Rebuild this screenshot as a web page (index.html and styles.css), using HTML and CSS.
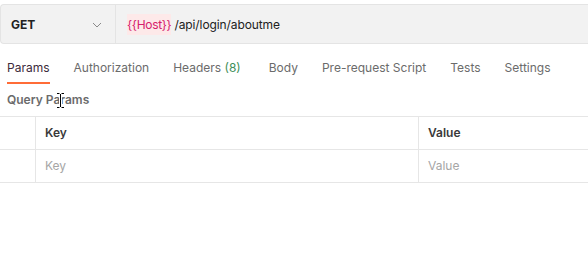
FILE: index.html
```html
<!DOCTYPE html>
<html>
<head>
<meta charset="utf-8">
<link rel="stylesheet" href="styles.css">
</head>
<body>
<div class="page">
  <div class="urlbar">
    <div class="method">
      <span class="method-name">GET</span>
      <svg class="chev" width="10" height="6" viewBox="0 0 10 6"><path d="M1 1 L5 5 L9 1" fill="none" stroke="#8a8a8a" stroke-width="1"/></svg>
    </div>
    <div class="url"><span class="var">{{Host}}</span><span class="path">/api/login/aboutme</span></div>
  </div>
  <div class="tabs">
    <span class="tab active">Params</span>
    <span class="tab">Authorization</span>
    <span class="tab wide">Headers <span class="count">(8)</span></span>
    <span class="tab">Body</span>
    <span class="tab">Pre-request Script</span>
    <span class="tab">Tests</span>
    <span class="tab">Settings</span>
  </div>
  <div class="section-title">Query Params</div>
  <div class="table">
    <div class="row head">
      <div class="cell chk"></div>
      <div class="cell key">Key</div>
      <div class="cell val">Value</div>
    </div>
    <div class="row">
      <div class="cell chk"></div>
      <div class="cell key ph">Key</div>
      <div class="cell val ph">Value</div>
    </div>
  </div>
  <svg class="cursor" width="9" height="17" viewBox="0 0 9 17"><path d="M1 1.5 H3.5 M5.5 1.5 H8 M4.5 2 V15 M1 15.5 H3.5 M5.5 15.5 H8" fill="none" stroke="#fff" stroke-width="3"/><path d="M1 1.5 H3.5 M5.5 1.5 H8 M4.5 2 V15 M1 15.5 H3.5 M5.5 15.5 H8" fill="none" stroke="#000" stroke-width="1"/></svg>
</div>
</body>
</html>
```
FILE: styles.css
```css
* { box-sizing: border-box; }
html, body { margin: 0; padding: 0; background: #fff; }
body { font-family: Inter, "Noto Sans", sans-serif; font-size: 12px; color: #212121; }
.page { position: relative; width: 588px; height: 270px; padding-top: 4px; overflow: hidden; }
.urlbar {
  display: flex; height: 40px; background: #f2f2f2;
  border: 1px solid #e4e4e4; border-right: none; border-radius: 4px 0 0 4px;
}
.method {
  width: 115px; flex: none; display: flex; align-items: center; justify-content: space-between;
  padding: 0 13px 0 10px; border-right: 1px solid #e4e4e4;
}
.method-name { font-weight: 700; font-size: 12px; color: #212121; }
.chev { margin-top: 1px; }
.url { display: flex; align-items: center; padding-left: 11px; color: #212121; white-space: pre; }
.var { color: #d6206c; background: #fde9e9; padding: 3px 0; letter-spacing: -0.3px; }
.path { margin-left: 3px; letter-spacing: -0.1px; }
.tabs { display: flex; padding-left: 7px; height: 44px; align-items: flex-start; padding-top: 16px; white-space: nowrap; gap: 24px; }
.tab { position: relative; color: #6b6b6b; line-height: 16px; }
.tab.wide { margin-right: 4px; }
.tab .count { color: #3f8f5a; }
.tab.active { color: #3d2a3b; }
.tab.active::after {
  content: ""; position: absolute; left: 0; right: 0; top: 22px; height: 2px; background: #ff6c37;
}
.section-title { padding-left: 7px; font-size: 12px; font-weight: 600; color: #6b6b6b; height: 28px; line-height: 18px; padding-top: 3px; }
.table { border-top: 1px solid #e6e6e6; }
.row { display: flex; height: 33px; border-bottom: 1px solid #e6e6e6; }
.cell { display: flex; align-items: center; padding-left: 9px; font-size: 12px; padding-bottom: 1px; }
.chk { width: 36px; flex: none; border-right: 1px solid #e6e6e6; padding: 0; }
.key { width: 383px; flex: none; border-right: 1px solid #e6e6e6; }
.val { flex: 1; }
.head .cell { font-weight: 600; color: #3a3a3a; }
.ph { color: #a6a6a6; }
.cursor { position: absolute; left: 56px; top: 92px; }
```
